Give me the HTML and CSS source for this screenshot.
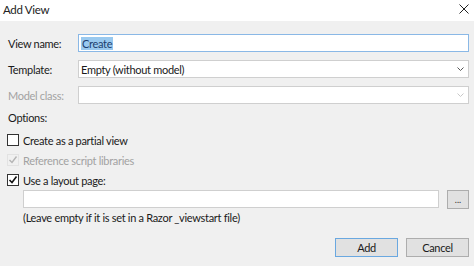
FILE: index.html
```html
<!DOCTYPE html>
<html lang="en">
<head>
  <meta charset="UTF-8" />
  <title>Add View</title>
  <link rel="stylesheet" href="styles.css">
</head>
<body>
  <div class="dialog">
    <div class="titlebar">
      <span class="title">Add View</span>
      <svg class="close" width="10" height="10" viewBox="0 0 10 10">
        <path d="M0.5 0.5 L9.5 9.5 M9.5 0.5 L0.5 9.5" stroke="#222" stroke-width="1" fill="none"/>
      </svg>
    </div>
    <div class="content">
      <div class="field-grid">
        <label>View name:</label>
        <div class="textbox focused"><span class="selected">Create</span></div>

        <label>Template:</label>
        <div class="textbox combo">
          <span>Empty (without model)</span>
          <svg class="chevron" width="7" height="4" viewBox="0 0 7 4"><path d="M0.5 0.5 L3.5 3.5 L6.5 0.5" stroke="#555" fill="none"/></svg>
        </div>

        <label class="disabled">Model class:</label>
        <div class="textbox combo">
          <span></span>
          <svg class="chevron" width="7" height="4" viewBox="0 0 7 4"><path d="M0.5 0.5 L3.5 3.5 L6.5 0.5" stroke="#c8c8c8" fill="none"/></svg>
        </div>
      </div>

      <div class="section-label">Options:</div>

      <div class="check-row">
        <span class="checkbox"></span>
        <span>Create as a partial view</span>
      </div>
      <div class="check-row disabled">
        <span class="checkbox dim">
          <svg width="10" height="10" viewBox="0 0 10 10"><path d="M1.5 5 L4 7.5 L8.5 1.5" stroke="#b4b4b4" stroke-width="1.4" fill="none"/></svg>
        </span>
        <span>Reference script libraries</span>
      </div>
      <div class="check-row">
        <span class="checkbox">
          <svg width="10" height="10" viewBox="0 0 10 10"><path d="M1.5 5 L4 7.5 L8.5 1.5" stroke="#111" stroke-width="1.6" fill="none"/></svg>
        </span>
        <span>Use a layout page:</span>
      </div>

      <div class="layout-row">
        <div class="textbox"></div>
        <button class="browse-btn">...</button>
      </div>
      <div class="hint">(Leave empty if it is set in a Razor _viewstart file)</div>

      <div class="actions">
        <button class="default">Add</button>
        <button>Cancel</button>
      </div>
    </div>
  </div>
</body>
</html>
```

FILE: styles.css
```css
body {
  margin: 0;
  padding: 0;
  font-family: Lato, 'Noto Sans', sans-serif;
  font-size: 11px;
  letter-spacing: -0.3px;
  color: #1a1a1a;
  background: #f0f0f0;
}
.dialog {
  width: 474px;
  height: 266px;
  background: #f0f0f0;
  overflow: hidden;
}
.titlebar {
  height: 21px;
  background: #fff;
  display: flex;
  align-items: center;
  justify-content: space-between;
  padding: 0 5px 0 3px;
}
.titlebar .title {
  font-size: 11.5px;
  color: #222;
  margin-top: -3px;
}
.titlebar .close {
  margin-top: -4px;
}
.content {
  padding: 13px 5px 0 8px;
}
.field-grid {
  display: grid;
  grid-template-columns: 70px 1fr;
  grid-auto-rows: 18px;
  row-gap: 8px;
  align-items: center;
}
.disabled {
  color: #a2a2a2;
}
.textbox {
  height: 18px;
  box-sizing: border-box;
  border: 1px solid #cfcfcf;
  background: #fff;
  display: flex;
  align-items: center;
  padding: 0 2px;
}
.textbox.focused {
  border-color: #8ab8e6;
}
.textbox .selected {
  background: #99c9ef;
  color: #1d3f6e;
  padding: 0 1px;
}
.textbox.combo {
  justify-content: space-between;
  padding-right: 4px;
}
.section-label {
  margin: 7px 0 5px 0;
  line-height: 14px;
}
.check-row {
  height: 20px;
  display: flex;
  align-items: center;
  gap: 4px;
  margin-left: -1px;
}
.checkbox {
  width: 12px;
  height: 12px;
  box-sizing: border-box;
  border: 1px solid #333;
  background: #fff;
  display: flex;
  align-items: center;
  justify-content: center;
}
.checkbox.dim {
  border-color: #e2e2e2;
  background: #f0f0f0;
}
.layout-row {
  display: flex;
  align-items: flex-start;
  gap: 8px;
  margin-left: 15px;
}
.layout-row .textbox {
  flex: 1;
}
.browse-btn {
  width: 22px;
  height: 19px;
  padding: 0;
  font-family: inherit;
  font-size: 9px;
  line-height: 10px;
  background: #e1e1e1;
  border: 1px solid #adadad;
  color: #333;
}
.hint {
  margin: 2px 0 0 15px;
  line-height: 14px;
}
.actions {
  display: flex;
  justify-content: flex-end;
  gap: 8px;
  margin-top: 13px;
}
.actions button {
  width: 63px;
  height: 19px;
  padding: 0;
  font-family: inherit;
  font-size: 11px;
  letter-spacing: -0.3px;
  background: #e1e1e1;
  border: 1px solid #adadad;
  color: #1a1a1a;
}
.actions button.default {
  border-color: #6aa8e0;
}
```
